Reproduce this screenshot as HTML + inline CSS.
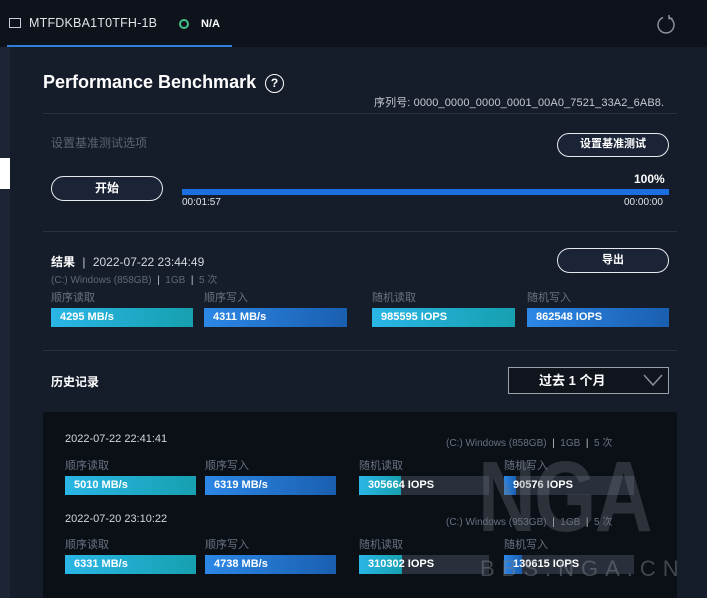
<!DOCTYPE html><html><head><meta charset="utf-8"><style>
*{margin:0;padding:0;box-sizing:border-box}
body{width:707px;height:598px;overflow:hidden;background:#161d2a;font-family:"Liberation Sans","Noto Sans CJK SC",sans-serif;color:#fff;position:relative}
.a{position:absolute;white-space:nowrap}
.top{left:0;top:0;width:707px;height:47px;background:#0e121a}
.strip{left:0;top:47px;width:10px;height:551px;background:#1d2535}
.btn{border:1.5px solid #e6e9ee;border-radius:13px;background:#1a2436;font-size:12px;font-weight:bold;text-align:center}
.lbl{font-size:11px;color:#687283}
.bar{height:19px;font-size:11px;font-weight:bold;padding-left:9px;line-height:19px}
.c1{background:linear-gradient(90deg,#2ab6e6,#16a0b0)}
.c2{background:linear-gradient(90deg,#2c87e6,#1a5fb0)}
.g{background:#2a303b}
.sep{height:1px;background:#283142}
</style></head><body>
<div class="a top"></div>
<div class="a" style="left:9px;top:18px;width:12px;height:10px;border:1.3px solid #c8ccd3"></div>
<div class="a" style="left:29px;top:16px;font-size:12.5px;color:#dfe3e8;letter-spacing:0.2px">MTFDKBA1T0TFH-1B</div>
<div class="a" style="left:179px;top:19px;width:10px;height:10px;border:2px solid #3fc28a;border-radius:50%"></div>
<div class="a" style="left:201px;top:18px;font-size:11px;font-weight:bold">N/A</div>
<div class="a" style="left:7px;top:45px;width:225px;height:2px;background:#2f7fdc"></div>
<svg class="a" style="left:655px;top:14px" width="22" height="22" viewBox="0 0 22 22"><path d="M14 3.5A8 8 0 1 1 8 3.5" fill="none" stroke="#8a9099" stroke-width="1.5"/><path d="M14 1v3.5h3.5" fill="none" stroke="#8a9099" stroke-width="1.5"/></svg>
<div class="a strip"></div>
<div class="a" style="left:0;top:158px;width:10px;height:31px;background:#fff"></div>
<div class="a" style="left:43px;top:72px;font-size:18px;font-weight:bold">Performance Benchmark</div>
<div class="a" style="left:265px;top:74px;width:19px;height:19px;border:1.5px solid #fff;border-radius:50%;font-size:12px;font-weight:bold;text-align:center;line-height:16px">?</div>
<div class="a" style="left:374px;top:94px;font-size:11px;color:#c4c9d1;letter-spacing:0.1px">序列号: 0000_0000_0000_0001_00A0_7521_33A2_6AB8.</div>
<div class="a sep" style="left:43px;top:113px;width:634px"></div>
<div class="a" style="left:51px;top:134px;font-size:12px;color:#5a6372">设置基准测试选项</div>
<div class="a btn" style="left:557px;top:133px;width:112px;height:24px;line-height:21px;font-size:11px">设置基准测试</div>
<div class="a btn" style="left:51px;top:176px;width:112px;height:25px;line-height:22px">开始</div>
<div class="a" style="left:634px;top:172px;font-size:12px;font-weight:bold">100%</div>
<div class="a" style="left:182px;top:189px;width:487px;height:6px;background:#1c6fe0"></div>
<div class="a" style="left:182px;top:197px;font-size:10px;color:#e0e4e9">00:01:57</div>
<div class="a" style="left:624px;top:197px;font-size:10px;color:#e0e4e9">00:00:00</div>
<div class="a sep" style="left:43px;top:231px;width:634px"></div>
<div class="a" style="left:51px;top:253px;font-size:12px"><b>结果</b> <span style="color:#c3c8cf;margin:0 4px">|</span> <span style="color:#d3d7dd">2022-07-22 23:44:49</span></div>
<div class="a lbl" style="left:51px;top:271px;font-size:10px;color:#5e6776">(C:) Windows (858GB) <span style="color:#c3c8cf">&nbsp;|&nbsp;</span> 1GB <span style="color:#c3c8cf">&nbsp;|&nbsp;</span> 5 次</div>
<div class="a btn" style="left:557px;top:248px;width:112px;height:25px;line-height:22px;font-size:11px">导出</div>
<div class="a lbl" style="left:51px;top:289px">顺序读取</div>
<div class="a lbl" style="left:204px;top:289px">顺序写入</div>
<div class="a lbl" style="left:372px;top:289px">随机读取</div>
<div class="a lbl" style="left:527px;top:289px">随机写入</div>
<div class="a bar c1" style="left:51px;top:308px;width:142px">4295 MB/s</div>
<div class="a bar c2" style="left:204px;top:308px;width:143px">4311 MB/s</div>
<div class="a bar c1" style="left:372px;top:308px;width:143px">985595 IOPS</div>
<div class="a bar c2" style="left:527px;top:308px;width:142px">862548 IOPS</div>
<div class="a sep" style="left:43px;top:350px;width:634px"></div>
<div class="a" style="left:51px;top:373px;font-size:12px;font-weight:bold">历史记录</div>
<div class="a" style="left:508px;top:367px;width:161px;height:27px;border:1px solid #9ba1ab;background:#0f141d;font-size:13px;font-weight:bold;line-height:25px;padding-left:30px">过去 1 个月</div>
<svg class="a" style="left:643px;top:374px" width="20" height="12" viewBox="0 0 20 12"><path d="M1 1l9 10 9-10" fill="none" stroke="#8a909a" stroke-width="1.5"/></svg>
<div class="a" style="left:43px;top:412px;width:634px;height:186px;background:#0b0f16"></div>
<div class="a" style="left:65px;top:433px;font-size:11px;color:#d3d7dd">2022-07-22 22:41:41</div>
<div class="a lbl" style="left:446px;top:434px;font-size:10px">(C:) Windows (858GB) <span style="color:#c3c8cf">&nbsp;|&nbsp;</span> 1GB <span style="color:#c3c8cf">&nbsp;|&nbsp;</span> 5 次</div>
<div class="a lbl" style="left:65px;top:457px">顺序读取</div><div class="a lbl" style="left:205px;top:457px">顺序写入</div><div class="a lbl" style="left:359px;top:457px">随机读取</div><div class="a lbl" style="left:504px;top:457px">随机写入</div>
<div class="a bar c1" style="left:65px;top:476px;width:131px">5010 MB/s</div>
<div class="a bar c2" style="left:205px;top:476px;width:131px">6319 MB/s</div>
<div class="a g" style="left:359px;top:476px;width:130px;height:19px"></div>
<div class="a bar" style="left:359px;top:476px;width:130px;background:linear-gradient(90deg,#2ab6e6,#16a0b0) 0 0/42px 19px no-repeat">305664 IOPS</div>
<div class="a g" style="left:504px;top:476px;width:130px;height:19px"></div>
<div class="a bar" style="left:504px;top:476px;width:130px;background:linear-gradient(90deg,#2c87e6,#1a5fb0) 0 0/12px 19px no-repeat">90576 IOPS</div>
<div class="a" style="left:65px;top:513px;font-size:11px;color:#d3d7dd">2022-07-20 23:10:22</div>
<div class="a lbl" style="left:446px;top:513px;font-size:10px">(C:) Windows (953GB) <span style="color:#c3c8cf">&nbsp;|&nbsp;</span> 1GB <span style="color:#c3c8cf">&nbsp;|&nbsp;</span> 5 次</div>
<div class="a lbl" style="left:65px;top:536px">顺序读取</div><div class="a lbl" style="left:205px;top:536px">顺序写入</div><div class="a lbl" style="left:359px;top:536px">随机读取</div><div class="a lbl" style="left:504px;top:536px">随机写入</div>
<div class="a bar c1" style="left:65px;top:555px;width:131px">6331 MB/s</div>
<div class="a bar c2" style="left:205px;top:555px;width:131px">4738 MB/s</div>
<div class="a g" style="left:359px;top:555px;width:130px;height:19px"></div>
<div class="a bar" style="left:359px;top:555px;width:130px;background:linear-gradient(90deg,#2ab6e6,#16a0b0) 0 0/43px 19px no-repeat">310302 IOPS</div>
<div class="a g" style="left:504px;top:555px;width:130px;height:19px"></div>
<div class="a bar" style="left:504px;top:555px;width:130px;background:linear-gradient(90deg,#2c87e6,#1a5fb0) 0 0/18px 19px no-repeat">130615 IOPS</div>
<div class="a" style="left:478px;top:440px;font-size:100px;font-weight:bold;color:rgba(110,115,125,0.35);letter-spacing:-2px;transform:scaleX(0.8);transform-origin:0 0">NGA</div>
<div class="a" style="left:480px;top:556px;font-size:22px;color:rgba(120,125,135,0.5);letter-spacing:7px">BBS.NGA.CN</div>
</body></html>
